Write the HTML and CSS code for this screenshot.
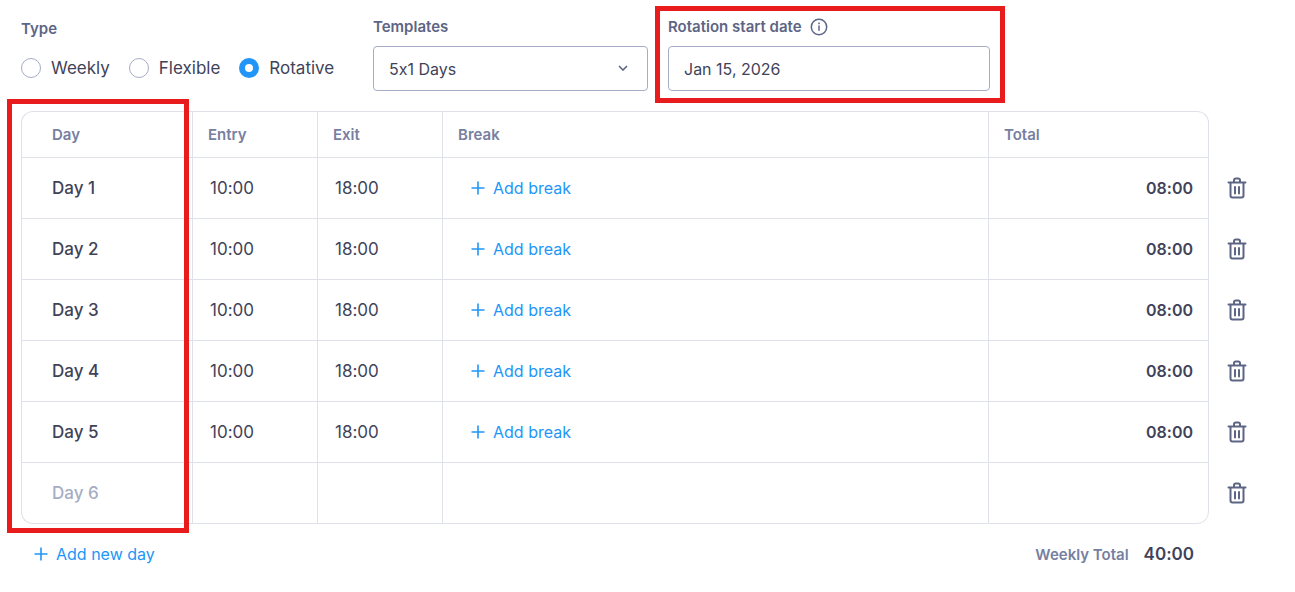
FILE: index.html
```html
<!DOCTYPE html>
<html lang="en">
<head>
    <meta charset="UTF-8">
    <meta name="viewport" content="width=device-width, initial-scale=1.0">
    <title>Schedule</title>
    <link rel="stylesheet" href="styles.css">
</head>
<body>
    <svg class="sprite" aria-hidden="true">
        <symbol id="icon-plus" viewBox="0 0 14 14">
            <path d="M7 0.5v13M0.5 7h13" fill="none" stroke="currentColor" stroke-width="1.6"/>
        </symbol>
        <symbol id="icon-trash" viewBox="0 0 20 22">
            <g fill="none" stroke="currentColor" stroke-width="2" stroke-linecap="round" stroke-linejoin="round">
                <path d="M1.5 5.5h17"/>
                <path d="M7 5V3.2A1.7 1.7 0 0 1 8.7 1.5h2.6A1.7 1.7 0 0 1 13 3.2V5"/>
                <path d="M3.5 6v12.5a2 2 0 0 0 2 2h9a2 2 0 0 0 2-2V6"/>
                <path d="M8 10v6.5M12 10v6.5"/>
            </g>
        </symbol>
    </svg>

    <form class="schedule">
        <div class="filters">
            <fieldset class="type">
                <legend>Type</legend>
                <div class="radios">
                    <label><input type="radio" name="type"> Weekly</label>
                    <label><input type="radio" name="type"> Flexible</label>
                    <label><input type="radio" name="type" checked> Rotative</label>
                </div>
            </fieldset>

            <div class="field field-template">
                <label for="template">Templates</label>
                <div class="select-wrap">
                    <select id="template" class="control">
                        <option>5x1 Days</option>
                    </select>
                    <svg class="chevron" width="10" height="6" viewBox="0 0 10 6" aria-hidden="true">
                        <path d="M1 1l4 4 4-4" fill="none" stroke="currentColor" stroke-width="1.6"/>
                    </svg>
                </div>
            </div>

            <div class="field field-date highlighted">
                <label for="start-date">
                    Rotation start date
                    <svg width="18" height="18" viewBox="0 0 18 18" aria-hidden="true">
                        <circle cx="9" cy="9" r="7.7" fill="none" stroke="currentColor" stroke-width="1.5"/>
                        <path d="M9 7.6v5.2M9 4.6v1.6" stroke="currentColor" stroke-width="1.5"/>
                    </svg>
                </label>
                <input id="start-date" class="control" type="text" value="Jan 15, 2026">
            </div>
        </div>

        <div class="table-wrap">
            <table>
                <colgroup>
                    <col class="col-day">
                    <col class="col-time">
                    <col class="col-time">
                    <col>
                    <col class="col-total">
                    <col class="col-action">
                </colgroup>
                <thead>
                    <tr>
                        <th class="day">Day</th>
                        <th>Entry</th>
                        <th>Exit</th>
                        <th>Break</th>
                        <th class="last">Total</th>
                        <td class="action"></td>
                    </tr>
                </thead>
                <tbody>
                    <tr>
                        <td class="day">Day 1</td>
                        <td class="time">10:00</td>
                        <td class="time">18:00</td>
                        <td class="break"><button type="button" class="add"><svg><use href="#icon-plus"/></svg>Add break</button></td>
                        <td class="total last">08:00</td>
                        <td class="action"><button type="button" class="delete" aria-label="Delete"><svg><use href="#icon-trash"/></svg></button></td>
                    </tr>
                    <tr>
                        <td class="day">Day 2</td>
                        <td class="time">10:00</td>
                        <td class="time">18:00</td>
                        <td class="break"><button type="button" class="add"><svg><use href="#icon-plus"/></svg>Add break</button></td>
                        <td class="total last">08:00</td>
                        <td class="action"><button type="button" class="delete" aria-label="Delete"><svg><use href="#icon-trash"/></svg></button></td>
                    </tr>
                    <tr>
                        <td class="day">Day 3</td>
                        <td class="time">10:00</td>
                        <td class="time">18:00</td>
                        <td class="break"><button type="button" class="add"><svg><use href="#icon-plus"/></svg>Add break</button></td>
                        <td class="total last">08:00</td>
                        <td class="action"><button type="button" class="delete" aria-label="Delete"><svg><use href="#icon-trash"/></svg></button></td>
                    </tr>
                    <tr>
                        <td class="day">Day 4</td>
                        <td class="time">10:00</td>
                        <td class="time">18:00</td>
                        <td class="break"><button type="button" class="add"><svg><use href="#icon-plus"/></svg>Add break</button></td>
                        <td class="total last">08:00</td>
                        <td class="action"><button type="button" class="delete" aria-label="Delete"><svg><use href="#icon-trash"/></svg></button></td>
                    </tr>
                    <tr>
                        <td class="day">Day 5</td>
                        <td class="time">10:00</td>
                        <td class="time">18:00</td>
                        <td class="break"><button type="button" class="add"><svg><use href="#icon-plus"/></svg>Add break</button></td>
                        <td class="total last">08:00</td>
                        <td class="action"><button type="button" class="delete" aria-label="Delete"><svg><use href="#icon-trash"/></svg></button></td>
                    </tr>
                    <tr class="off">
                        <td class="day">Day 6</td>
                        <td></td>
                        <td></td>
                        <td></td>
                        <td class="last"></td>
                        <td class="action"><button type="button" class="delete" aria-label="Delete"><svg><use href="#icon-trash"/></svg></button></td>
                    </tr>
                </tbody>
            </table>
            <div class="day-highlight"></div>
        </div>

        <div class="footer">
            <button type="button" class="add"><svg><use href="#icon-plus"/></svg>Add new day</button>
            <div class="weekly-total">
                <span>Weekly Total</span>
                <strong>40:00</strong>
            </div>
        </div>
    </form>
</body>
</html>
```

FILE: styles.css
```css
* {
    box-sizing: border-box;
}

body {
    margin: 0;
    background-color: #fff;
    color: #3f4359;
    font-family: Inter, "Liberation Sans", sans-serif;
    font-size: 17px;
    font-feature-settings: "calt" 0;
}

button,
input,
select {
    font: inherit;
    font-feature-settings: inherit;
    color: inherit;
}

button {
    padding: 0;
    border: none;
    background: none;
    cursor: pointer;
}

.sprite {
    display: none;
}

.schedule {
    padding: 16px 36px 16px 21px;
}

/* Top filters */
.filters {
    display: flex;
    gap: 20px;
    margin-bottom: 20px;
}

.type {
    width: 332px;
    margin: 0;
    padding: 0;
    border: none;
}

.type legend,
.field label {
    padding: 0;
    color: #5d6585;
    font-size: 15px;
    font-weight: 600;
    line-height: 22px;
}

.type legend {
    margin-bottom: 4px;
    line-height: 26px;
}

.radios {
    display: flex;
    align-items: center;
    gap: 19px;
    height: 44px;
}

.radios label {
    display: flex;
    align-items: center;
    gap: 10px;
}

.radios input {
    appearance: none;
    width: 20px;
    height: 20px;
    margin: 0;
    border: 1px solid #a5adc6;
    border-radius: 50%;
}

.radios input:checked {
    border: 6px solid #2196f8;
}

.field {
    display: flex;
    flex-direction: column;
    gap: 8px;
}

.field label {
    display: flex;
    align-items: center;
    gap: 8px;
}

.field-template {
    width: 275px;
}

.field-date {
    width: 322px;
}

.control {
    display: block;
    width: 100%;
    height: 45px;
    padding: 0 15px;
    border: 1px solid #a5adc6;
    border-radius: 4px;
    background-color: #fff;
    font-size: 16px;
    appearance: none;
}

.select-wrap {
    position: relative;
}

.chevron {
    position: absolute;
    top: 19px;
    right: 20px;
    color: #5d6585;
    pointer-events: none;
}

/* Red highlight frames */
.highlighted {
    position: relative;
}

.highlighted::after,
.day-highlight {
    content: "";
    position: absolute;
    border: 5px solid #e81c1c;
    pointer-events: none;
}

.highlighted::after {
    top: -10px;
    right: -15px;
    bottom: -12px;
    left: -13px;
}

.day-highlight {
    top: -12px;
    bottom: -9px;
    left: -14px;
    width: 182px;
}

/* Days table */
.table-wrap {
    position: relative;
}

table {
    width: 100%;
    border-collapse: separate;
    border-spacing: 0;
    table-layout: fixed;
}

.col-day {
    width: 171px;
}

.col-time {
    width: 125px;
}

.col-total {
    width: 221px;
}

.col-action {
    width: 50px;
}

th,
td {
    height: 61px;
    padding: 0 15px;
    border: 0 solid #dee1e9;
    border-width: 1px 0 0 1px;
    text-align: left;
}

thead th,
thead td {
    height: 46px;
}

th {
    color: #7780a1;
    font-size: 15px;
    font-weight: 600;
}

.day {
    padding-left: 30px;
}

td.day {
    font-weight: 500;
}

.off .day {
    color: #a5adc6;
}

.time {
    padding-left: 17px;
}

.break {
    padding-left: 28px;
}

td.total {
    text-align: right;
    font-size: 16px;
    font-weight: 600;
}

.last {
    border-right-width: 1px;
}

tbody tr:last-child td {
    height: 62px;
    border-bottom-width: 1px;
}

thead .day {
    border-top-left-radius: 12px;
}

thead .last {
    border-top-right-radius: 12px;
}

tbody tr:last-child .day {
    border-bottom-left-radius: 12px;
}

tbody tr:last-child .last {
    border-bottom-right-radius: 12px;
}

table td.action,
tbody tr:last-child td.action {
    padding: 0 0 0 18px;
    border: none;
}

.delete {
    display: block;
    color: #5d6585;
}

.delete svg {
    display: block;
    width: 20px;
    height: 22px;
}

.add {
    display: flex;
    align-items: center;
    gap: 8px;
    color: #2196f8;
    font-size: 16px;
    line-height: 20px;
}

.add svg {
    width: 14px;
    height: 14px;
}

.footer {
    display: flex;
    justify-content: space-between;
    align-items: center;
    margin-top: 20px;
    padding: 0 65px 0 13px;
}

.weekly-total {
    display: flex;
    align-items: center;
    gap: 15px;
}

.weekly-total span {
    color: #7780a1;
    font-size: 15px;
    font-weight: 600;
}

.weekly-total strong {
    font-weight: 600;
}
```
